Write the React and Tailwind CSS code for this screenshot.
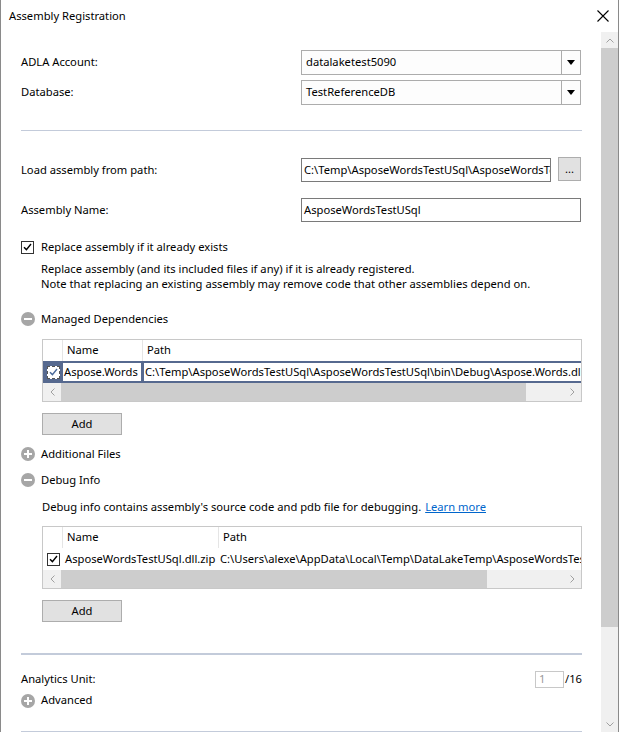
import React from "react";

const font = { fontFamily: '"Noto Sans", "Segoe UI", sans-serif' };

function Combo({ value }) {
  return (
    <div className="w-[280px] h-[25px] border border-[#acacac] bg-[#fdfdfd] flex items-center">
      <div className="flex-1 pl-[4px] truncate">{value}</div>
      <div className="w-[19px] h-full border-l border-[#acacac] flex items-center justify-center">
        <svg width="8" height="5" viewBox="0 0 8 5"><path d="M0 0H8L4 5Z" fill="#000" /></svg>
      </div>
    </div>
  );
}

function Expander({ plus }) {
  return (
    <svg width="14" height="14" viewBox="0 0 14 14">
      <circle cx="7" cy="7" r="7" fill="#a6a6a6" />
      <rect x="3" y="6" width="8" height="2" fill="#fff" />
      {plus && <rect x="6" y="3" width="2" height="8" fill="#fff" />}
    </svg>
  );
}

function Check({ dashed }) {
  return (
    <div className={"w-[13px] h-[13px] bg-white flex items-center justify-center " + (dashed ? "border border-dashed border-[#555]" : "border border-[#333]")}>
      <svg width="9" height="8" viewBox="0 0 9 8"><path d="M1 4.2L3.4 6.6L8 1" stroke={dashed ? "#4a6a9a" : "#000"} strokeWidth="1.4" fill="none" /></svg>
    </div>
  );
}

function HScroll({ thumb }) {
  return (
    <div className="h-[18px] flex bg-[#f0f0f0]">
      <div className="w-[18px] flex items-center justify-center">
        <svg width="5" height="8" viewBox="0 0 5 8"><path d="M4.5 0.5L1 4L4.5 7.5" stroke="#a0a0a0" fill="none" /></svg>
      </div>
      <div className="bg-[#cdcdcd]" style={{ width: thumb }} />
      <div className="flex-1" />
      <div className="w-[18px] flex items-center justify-center">
        <svg width="5" height="8" viewBox="0 0 5 8"><path d="M0.5 0.5L4 4L0.5 7.5" stroke="#a0a0a0" fill="none" /></svg>
      </div>
    </div>
  );
}

function Button({ children }) {
  return (
    <div className="w-[80px] h-[22px] border border-[#adadad] bg-[#e1e1e1] flex items-center justify-center">{children}</div>
  );
}

export default function App() {
  return (
    <div className="w-[619px] h-[732px] bg-white border-l border-r border-[#8a8a8a] text-[11.2px] text-black overflow-hidden flex flex-col" style={font}>
      <div className="h-[32px] flex items-center pl-[8px] pr-[9px] shrink-0">
        <span className="flex-1">Assembly Registration</span>
        <svg width="12" height="12" viewBox="0 0 12 12"><path d="M0.5 0.5L11.5 11.5M11.5 0.5L0.5 11.5" stroke="#000" strokeWidth="1.1" /></svg>
      </div>
      <div className="flex flex-1 min-h-0">
        <div className="w-[600px] pl-[20px] pr-[19px] pt-[18px] flex flex-col">
          <div className="h-[25px] flex items-center">
            <div className="w-[280px]">ADLA Account:</div>
            <Combo value="datalaketest5090" />
          </div>
          <div className="h-[25px] mt-[5px] flex items-center">
            <div className="w-[280px]">Database:</div>
            <Combo value="TestReferenceDB" />
          </div>
          <div className="h-[2px] mt-[25px] bg-[#c3cbda]" />
          <div className="h-[24px] mt-[27px] flex items-center">
            <div className="w-[280px]">Load assembly from path:</div>
            <div className="w-[250px] h-[24px] border border-[#7a7a7a] bg-white flex items-center pl-[2px] overflow-hidden">
              <span className="whitespace-nowrap">C:\Temp\AsposeWordsTestUSql\AsposeWordsTestUSql</span>
            </div>
            <div className="ml-[7px] w-[23px] h-[24px] -mt-[2px] border border-[#adadad] bg-[#e1e1e1] flex items-center justify-center">...</div>
          </div>
          <div className="h-[24px] mt-[16px] flex items-center">
            <div className="w-[280px]">Assembly Name:</div>
            <div className="w-[280px] h-[24px] border border-[#7a7a7a] bg-white flex items-center pl-[2px]">AsposeWordsTestUSql</div>
          </div>
          <div className="h-[14px] mt-[18px] flex items-center">
            <Check />
            <span className="ml-[7px]">Replace assembly if it already exists</span>
          </div>
          <div className="mt-[7px] pl-[20px] leading-[15px]">
            <div>Replace assembly (and its included files if any) if it is already registered.</div>
            <div>Note that replacing an existing assembly may remove code that other assemblies depend on.</div>
          </div>
          <div className="h-[16px] mt-[20px] flex items-center">
            <Expander />
            <span className="ml-[6px]">Managed Dependencies</span>
          </div>
          <div className="mt-[12px] ml-[21px] border border-[#c8c8c8] flex flex-col">
            <div className="h-[21px] flex">
              <div className="w-[20px] border-r border-[#e5e5e5]" />
              <div className="w-[80px] border-r border-[#e5e5e5] pl-[4px] flex items-center">Name</div>
              <div className="flex-1 pl-[4px] flex items-center">Path</div>
            </div>
            <div className="h-[22px] bg-[#56698f] flex items-center py-[2px]">
              <div className="w-[20px] flex items-center justify-center"><Check dashed /></div>
              <div className="w-[78px] h-full bg-white flex items-center pl-[1px] overflow-hidden"><span className="whitespace-nowrap">Aspose.Words</span></div>
              <div className="flex-1 h-full ml-[3px] bg-white flex items-center pl-[1px] overflow-hidden"><span className="whitespace-nowrap">C:\Temp\AsposeWordsTestUSql\AsposeWordsTestUSql\bin\Debug\Aspose.Words.dll</span></div>
            </div>
            <HScroll thumb={465} />
          </div>
          <div className="mt-[11px] ml-[21px]"><Button>Add</Button></div>
          <div className="h-[16px] mt-[11px] flex items-center">
            <Expander plus />
            <span className="ml-[6px]">Additional Files</span>
          </div>
          <div className="h-[16px] mt-[10px] flex items-center">
            <Expander />
            <span className="ml-[6px]">Debug Info</span>
          </div>
          <div className="h-[15px] mt-[12px] ml-[21px] flex items-center">
            <span>Debug info contains assembly's source code and pdb file for debugging.</span>
            <span className="ml-[4px] text-[#0066cc] underline">Learn more</span>
          </div>
          <div className="mt-[11px] ml-[21px] border border-[#c8c8c8] flex flex-col">
            <div className="h-[21px] flex">
              <div className="w-[20px] border-r border-[#e5e5e5]" />
              <div className="w-[156px] border-r border-[#e5e5e5] pl-[4px] flex items-center">Name</div>
              <div className="flex-1 pl-[4px] flex items-center">Path</div>
            </div>
            <div className="h-[22px] flex items-center">
              <div className="w-[20px] flex items-center justify-center"><Check /></div>
              <div className="w-[156px] pl-[2px] overflow-hidden"><span className="whitespace-nowrap">AsposeWordsTestUSql.dll.zip</span></div>
              <div className="flex-1 pl-[1px] overflow-hidden"><span className="whitespace-nowrap">C:\Users\alexe\AppData\Local\Temp\DataLakeTemp\AsposeWordsTestUSql.dll.zip</span></div>
            </div>
            <HScroll thumb={426} />
          </div>
          <div className="mt-[11px] ml-[21px]"><Button>Add</Button></div>
          <div className="h-[2px] mt-[31px] bg-[#c3cbda]" />
          <div className="h-[17px] mt-[16px] flex items-center">
            <span className="flex-1">Analytics Unit:</span>
            <div className="w-[29px] h-[17px] border border-[#c8c8c8] text-[#9a9a9a] pl-[3px] flex items-center">1</div>
            <span className="ml-[1px]">/16</span>
          </div>
          <div className="h-[16px] mt-[5px] flex items-center">
            <Expander plus />
            <span className="ml-[6px]">Advanced</span>
          </div>
          <div className="h-[2px] mt-[22px] bg-[#c3cbda]" />
        </div>
        <div className="w-[17px] flex flex-col bg-[#f0f0f0]">
          <div className="h-[16px] flex items-center justify-center">
            <svg width="8" height="5" viewBox="0 0 8 5"><path d="M0.5 4.5L4 1L7.5 4.5" stroke="#a0a0a0" fill="none" /></svg>
          </div>
          <div className="h-[579px] bg-[#cdcdcd]" />
          <div className="flex-1" />
          <div className="h-[16px] flex items-center justify-center">
            <svg width="8" height="5" viewBox="0 0 8 5"><path d="M0.5 0.5L4 4L7.5 0.5" stroke="#a0a0a0" fill="none" /></svg>
          </div>
        </div>
      </div>
    </div>
  );
}
